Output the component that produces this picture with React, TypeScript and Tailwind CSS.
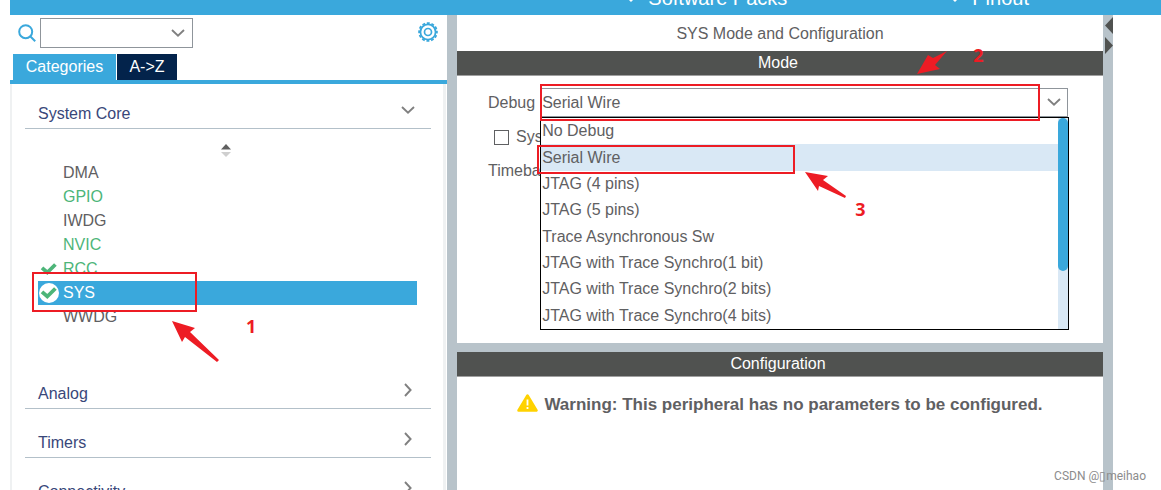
import { useState } from 'react'

const peripherals = [
	{ name: 'DMA', color: 'text-[#5f6062]', status: 'none' },
	{ name: 'GPIO', color: 'text-[#4db579]', status: 'none' },
	{ name: 'IWDG', color: 'text-[#5f6062]', status: 'none' },
	{ name: 'NVIC', color: 'text-[#4db579]', status: 'none' },
	{ name: 'RCC', color: 'text-[#4db579]', status: 'ok' },
	{ name: 'SYS', color: 'text-white', status: 'active' },
	{ name: 'WWDG', color: 'text-[#5f6062]', status: 'none' },
]

const debugModes = [
	'No Debug',
	'Serial Wire',
	'JTAG (4 pins)',
	'JTAG (5 pins)',
	'Trace Asynchronous Sw',
	'JTAG with Trace Synchro(1 bit)',
	'JTAG with Trace Synchro(2 bits)',
	'JTAG with Trace Synchro(4 bits)',
]

function Chevron({ className = '' }: { className?: string }) {
	return (
		<svg viewBox="0 0 14 8" className={`h-2 w-[14px] shrink-0 ${className}`} fill="none" stroke="currentColor" strokeWidth="1.9">
			<path d="M1 1l6 5.6L13 1" />
		</svg>
	)
}

function GearIcon() {
	return (
		<svg viewBox="0 0 20 20" className="size-5" fill="none" stroke="#3aa8dc">
			<circle cx="10" cy="10" r="8.900" strokeWidth="1.8" strokeDasharray="2.900 1.760" strokeDashoffset="1.450" />
			<circle cx="10" cy="10" r="7.600" strokeWidth="1.800" />
			<circle cx="10" cy="10" r="3.500" strokeWidth="1.700" />
		</svg>
	)
}

function StatusIcon({ status }: { status: string }) {
	if (status === 'none') return null
	return (
		<svg viewBox="0 0 20 20" className="size-5">
			{status === 'active' && <circle cx="10" cy="10" r="10" fill="#fff" />}
			<path d="M3 8.800l5.300 4.700L16.400 5.500" fill="none" stroke="#4db579" strokeWidth="3.800" />
		</svg>
	)
}

function SectionHeader({ title, open = false }: { title: string; open?: boolean }) {
	return (
		<button type="button" aria-expanded={open} className="mr-3 ml-[13px] flex h-[45px] shrink-0 items-end justify-between border-b border-[#b3c0c9] pr-4 pb-1 pl-[13px] text-[#39477a]">
			<span className="leading-5">{title}</span>
			<span className="flex h-7 items-center">
				<Chevron className={open ? 'text-[#808080]' : '-rotate-90 text-[#808080]'} />
			</span>
		</button>
	)
}

// Numbered red marks drawn over the panels
function Arrow({ points, className }: { points: string; className: string }) {
	return (
		<svg viewBox="0 0 48 42" className={`pointer-events-none absolute h-[42px] w-12 ${className}`}>
			<polygon points={points} fill="#ed1c24" />
		</svg>
	)
}

function Mark({ label, className }: { label: string; className: string }) {
	return (
		<span className={`pointer-events-none absolute font-['Open_Sans',sans-serif] text-lg leading-5 font-bold text-[#ed1c24] ${className}`}>
			{label}
		</span>
	)
}

function Sidebar() {
	const [active, setActive] = useState('SYS')

	return (
		<aside className="relative flex w-[437px] shrink-0 flex-col">
			<div className="flex h-[39px] shrink-0 items-start justify-between pt-[3px] pr-[9px] pl-2">
				<div className="flex items-center gap-1">
					<svg viewBox="0 0 18 18" className="size-[18px]" fill="none" stroke="#3aa8dc" strokeWidth="2">
						<circle cx="7.7" cy="7.7" r="6.5" />
						<path d="M12.2 12.2l5 5" />
					</svg>
					<div className="relative">
						<select aria-label="Search" className="block h-[30px] w-[153px] appearance-none border border-[#8f959b] bg-white px-1">
							<option></option>
						</select>
						<Chevron className="pointer-events-none absolute top-[11px] right-2 text-[#808080]" />
					</div>
				</div>
				<button type="button" aria-label="Settings" className="mt-1">
					<GearIcon />
				</button>
			</div>
			<div className="flex h-[30px] shrink-0 gap-px border-b-4 border-[#3aa8dc] pl-[3px] text-white">
				<button type="button" className="w-[103px] bg-[#3aa8dc]">Categories</button>
				<button type="button" className="w-[60px] bg-[#03234b]">A-&gt;Z</button>
			</div>
			<div className="mr-px flex min-h-0 flex-1 flex-col overflow-hidden border-r-3 border-l-2 border-[#eff1f2]">
				<SectionHeader title="System Core" open />
				<div className="flex h-8 shrink-0 justify-center pt-[15px] pr-1">
					<svg viewBox="0 0 10 13" className="h-[13px] w-[10px]">
						<path d="M0 5.5L5 0l5 5.5z" fill="#606060" />
						<path d="M0 8h10l-5 5z" fill="#cfcfcf" />
					</svg>
				</div>
				<ul className="mx-[26px]">
					{peripherals.map((item) => (
						<li key={item.name}>
							<button
								type="button"
								onClick={() => setActive(item.name)}
								className={`flex h-6 w-full items-center ${item.color} ${item.name === active ? 'bg-[#3aa8dc]' : ''}`}
							>
								<span className="w-[25px] pl-px">
									<StatusIcon status={item.status} />
								</span>
								{item.name}
							</button>
						</li>
					))}
				</ul>
				<div className="mt-[35px] flex flex-col gap-1">
					<SectionHeader title="Analog" />
					<SectionHeader title="Timers" />
					<SectionHeader title="Connectivity" />
				</div>
			</div>
			<div className="pointer-events-none absolute top-[257px] left-[22px] h-10 w-[165px] border-2 border-[#ed1c24]" />
			<Arrow points="0,0 23,7 18,11 47,39 45,41 13,16 10,21" className="top-[306px] left-[162px]" />
			<Mark label="1" className="top-[301px] left-[236px]" />
		</aside>
	)
}

function DebugPicker() {
	const [mode, setMode] = useState('Serial Wire')

	return (
		<div className="relative flex-1">
			<select
				id="debug"
				value={mode}
				onChange={(e) => setMode(e.target.value)}
				className="block h-[29px] w-full appearance-none border border-[#8f959b] bg-white pl-px"
			>
				{debugModes.map((name) => (
					<option key={name}>{name}</option>
				))}
			</select>
			<Chevron className="pointer-events-none absolute top-[10px] right-[7px] text-[#808080]" />
			<div className="absolute top-[29px] -right-px left-0 z-10 flex h-[213px] border border-black bg-white">
				<ul className="grid flex-1 auto-rows-fr">
					{debugModes.map((name) => (
						<li key={name} className={name === mode ? 'bg-[#d9e8f5]' : ''}>
							<button type="button" onClick={() => setMode(name)} className="flex h-full w-full items-center pl-px">
								{name}
							</button>
						</li>
					))}
				</ul>
				<div className="w-[10px] bg-[#d9e8f5]">
					<div className="h-[153px] rounded-full bg-[#3aa8dc]" />
				</div>
			</div>
			<div className="pointer-events-none absolute inset-0 z-20">
				<div className="absolute -top-1 right-7 left-0 h-[37px] border-2 border-[#ed1c24]" />
				<div className="absolute top-[57px] -left-[3px] h-[29px] w-[258px] border-2 border-[#ed1c24]" />
				<Arrow points="0,23 11,4 16,7 30,0 18,14 23,18" className="-top-[37px] left-[377px]" />
				<Mark label="2" className="-top-[43px] left-[433px]" />
				<Arrow points="0,0 23,4 18,8 41,24 40,26 14,14 13,19" className="top-[84px] left-[265px]" />
				<Mark label="3" className="top-[111px] left-[315px]" />
			</div>
		</div>
	)
}

export default function App() {
	return (
		<div className="relative flex h-screen flex-col overflow-hidden bg-white pl-[10px] font-['Liberation_Sans',Arial,sans-serif] text-base text-[#5f6062]">
			<nav className="flex h-[15px] shrink-0 items-end justify-end gap-[161px] overflow-hidden bg-[#3aa8dc] pr-[132px] pb-[5px] text-xl leading-6 text-white">
				<a href="#packs" className="flex items-center gap-[10px]">
					<Chevron />
					Software Packs
				</a>
				<a href="#pinout" className="flex items-center gap-[10px]">
					<Chevron />
					Pinout
				</a>
			</nav>
			<div className="flex min-h-0 flex-1">
				<Sidebar />
				<div className="w-[10px] shrink-0 bg-[#b8c3ca]" />
				<main className="flex min-w-0 flex-1 flex-col">
					<h1 className="h-9 shrink-0 pt-px text-center leading-9">SYS Mode and Configuration</h1>
					<h2 className="h-[25px] shrink-0 border-b border-[#a0a0a0] bg-[#505250] pr-1 text-center leading-6 text-white">Mode</h2>
					<div className="h-[267px] shrink-0 px-[31px] pt-3">
						<div className="flex items-center gap-[5px] pr-1">
							<label htmlFor="debug">Debug</label>
							<DebugPicker />
						</div>
						<label className="mt-2 flex h-6 items-center gap-[7px] pl-[6px]">
							<input type="checkbox" className="size-[15px] appearance-none border border-[#5f6062] bg-white" />
							System Wake-Up
						</label>
						<div className="mt-[10px] leading-6">Timebase Source</div>
					</div>
					<div className="h-[9px] shrink-0 bg-[#b8c3ca]" />
					<h2 className="h-[25px] shrink-0 border-b border-[#a0a0a0] bg-[#505250] pr-1 text-center leading-6 text-white">Configuration</h2>
					<div className="flex items-center justify-center gap-[6px] pt-4 text-[17px] leading-6 font-bold">
						<svg viewBox="0 0 21 18" className="mb-1 h-[18px] w-[21px] shrink-0">
							<path d="M10.5 1.5L19.5 16.5h-18z" fill="#ffd200" stroke="#ffd200" strokeWidth="2.5" strokeLinejoin="round" />
							<path d="M10.5 5.5v6M10.5 13v2" stroke="#fff" strokeWidth="1.8" />
						</svg>
						<p>Warning: This peripheral has no parameters to be configured.</p>
					</div>
				</main>
				<div className="flex w-[10px] shrink-0 flex-col items-end gap-[3px] bg-[#b8c3ca] pt-[2px]">
					<button type="button" aria-label="Collapse left">
						<svg viewBox="0 0 8 17" className="h-[17px] w-2" fill="#505250"><path d="M8 0v17L0 8.5z" /></svg>
					</button>
					<button type="button" aria-label="Collapse right">
						<svg viewBox="0 0 8 17" className="h-[17px] w-2" fill="#505250"><path d="M0 0v17l8-8.5z" /></svg>
					</button>
				</div>
				<div className="w-12 shrink-0" />
			</div>
			<span className="absolute right-[15px] bottom-[6px] font-[Roboto,sans-serif] text-xs text-[#8c8c8c]">CSDN @▯meihao</span>
		</div>
	)
}
